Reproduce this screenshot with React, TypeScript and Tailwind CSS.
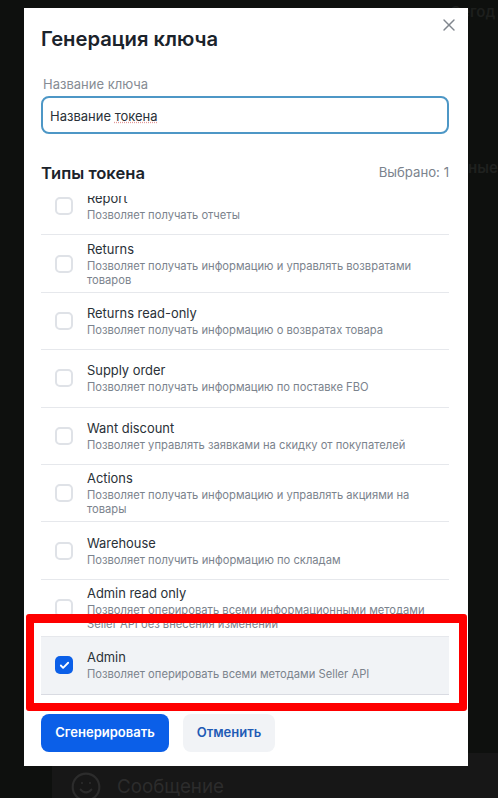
import React from 'react';
import { Smile, X, Check } from 'lucide-react';

interface TokenType {
  name: string;
  text: string;
  checked?: boolean;
}

const tokenTypes: TokenType[] = [
  { name: 'Report', text: 'Позволяет получать отчеты' },
  { name: 'Returns', text: 'Позволяет получать информацию и управлять возвратами товаров' },
  { name: 'Returns read-only', text: 'Позволяет получать информацию о возвратах товара' },
  { name: 'Supply order', text: 'Позволяет получать информацию по поставке FBO' },
  { name: 'Want discount', text: 'Позволяет управлять заявками на скидку от покупателей' },
  { name: 'Actions', text: 'Позволяет получать информацию и управлять акциями на товары' },
  { name: 'Warehouse', text: 'Позволяет получить информацию по складам' },
  { name: 'Admin read only', text: 'Позволяет оперировать всеми информационными методами Seller API без внесения изменений' },
  { name: 'Admin', text: 'Позволяет оперировать всеми методами Seller API', checked: true },
];

function TokenRow({ item }: { item: TokenType }) {
  return (
    <div
      className={`flex h-[57.4px] items-center gap-[14px] border-b pl-[14px] pr-3 ${
        item.checked ? 'border-[#d9dbe2] bg-[#f1f3f6]' : 'border-[#e6e8ec] bg-white'
      }`}
    >
      {item.checked ? (
        <span className="flex h-[18px] w-[18px] shrink-0 items-center justify-center rounded-[5px] bg-[#0b5fe8]">
          <Check size={11} strokeWidth={4} className="text-white" />
        </span>
      ) : (
        <span className="h-[18px] w-[18px] shrink-0 rounded-[5px] border-2 border-[#dfe2e7] bg-white" />
      )}
      <div className="min-w-0">
        <div className="text-[12.9px] leading-[18px] text-[#2a3138]">{item.name}</div>
        <div className="text-[11.2px] leading-[14px] text-[#7b838d]">{item.text}</div>
      </div>
    </div>
  );
}

export default function App() {
  return (
    <div className="relative flex h-[798px] w-[498px] flex-col justify-end overflow-hidden bg-[#0e100e] font-['Inter','Liberation_Sans',sans-serif]">
      {/* то что видно за модалкой */}
      <div className="absolute left-[450px] top-[1px] whitespace-nowrap text-[15px] font-semibold text-[#1d1f1d]">
        Сегод
      </div>
      <div className="absolute left-[468px] top-[157px] whitespace-nowrap text-[15px] font-semibold text-[#1f211f]">
        ные
      </div>
      <div className="ml-[52px] flex h-[45px] items-start gap-[15px] bg-[#171717] pl-[18px] pt-[20px]">
        <Smile size={32} strokeWidth={1.6} className="-mt-[2px] shrink-0 text-[#2c2c2c]" />
        <span className="text-[18.8px] leading-[28px] text-[#2c2c2c]">Сообщение</span>
      </div>

      {/* модалка */}
      <div className="absolute left-[24px] top-[8px] flex h-[758px] w-[444px] flex-col bg-white pl-[17px] pr-[19px]">
        <button className="absolute right-[9px] top-[7px] text-[#80868e]">
          <X size={20} strokeWidth={1.7} />
        </button>
        <h2 className="mt-[17px] text-[20.2px] font-semibold leading-[28px] text-[#1b232b]">Генерация ключа</h2>
        <label className="ml-[2px] mt-[23px] text-[13px] leading-[17px] text-[#868c94]">Название ключа</label>
        <div className="mt-[3px] flex h-[38px] shrink-0 items-center rounded-[8px] border-2 border-[#4d97c6] px-[7px] pt-[4px] text-[13px] text-[#2a3138]">
          <span>
            Название <span className="underline decoration-[#e39a9a] decoration-dotted">токена</span>
          </span>
        </div>
        <div className="mt-[26px] flex items-center justify-between">
          <h3 className="text-[16.6px] font-semibold leading-[26px] text-[#1b232b]">Типы токена</h3>
          <span className="text-[13.2px] text-[#7b838d]">Выбрано: 1</span>
        </div>
        <div className="mt-[10px] h-[504px] shrink-0 overflow-hidden">
          <div className="-mt-[18px]">
            {tokenTypes.map((item) => (
              <TokenRow key={item.name} item={item} />
            ))}
          </div>
        </div>
        <div className="mt-[14px] flex gap-[14px]">
          <button className="h-[38px] w-[128px] rounded-[8px] bg-[#0b5fe8] text-[13px] font-semibold text-white">
            Сгенерировать
          </button>
          <button className="h-[38px] w-[92px] rounded-[8px] bg-[#f1f3f6] text-[13px] font-semibold text-[#1f5bb5]">
            Отменить
          </button>
        </div>
      </div>

      {/* красная рамка поверх */}
      <div className="absolute left-[26px] top-[614px] h-[97px] w-[441px] rounded-[3px] border-x-[8px] border-b-[8px] border-t-[9px] border-[#fe0000]" />
    </div>
  );
}
